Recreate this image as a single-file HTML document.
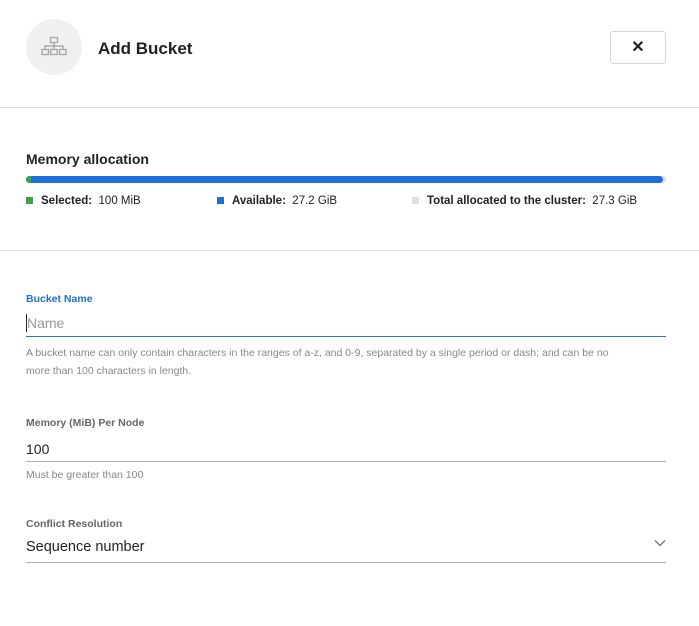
<!DOCTYPE html>
<html><head><meta charset="utf-8"><style>
*{margin:0;padding:0;box-sizing:border-box}
body{width:699px;height:626px;background:#fff;font-family:"Liberation Sans",sans-serif;color:#222;position:relative;overflow:hidden}
.a{position:absolute;white-space:nowrap}
.hr{position:absolute;left:0;width:699px;height:1px;background:#dedede}
.line{position:absolute;left:26px;width:640px;height:1px;background:#aaa}
.lbl{font-size:10.5px;color:#666;font-weight:bold}
.help{font-size:10.5px;color:#888}
.sq{display:inline-block;width:7px;height:7px;vertical-align:0px;margin-right:8px}
</style></head><body>
<div class="a" style="left:26px;top:19px;width:56px;height:56px;border-radius:50%;background:#f0f0f0"></div>
<svg class="a" style="left:41px;top:36px" width="26" height="22" viewBox="0 0 26 22" fill="none" stroke="#aaa" stroke-width="1.4">
<rect x="9.5" y="1.5" width="7" height="5"/><path d="M13 6.5V10M4 13.5V10H22V13.5M13 10v3.5"/><rect x="1" y="13.5" width="6.5" height="5"/><rect x="9.7" y="13.5" width="6.5" height="5"/><rect x="18.5" y="13.5" width="6.5" height="5"/></svg>
<div class="a" style="left:98px;top:39px;font-size:17px;font-weight:bold;color:#222">Add Bucket</div>
<div class="a" style="left:610px;top:31px;width:56px;height:33px;border:1px solid #d6d6d6;border-radius:3px;text-align:center;line-height:31px;font-size:16px;font-weight:bold">✕</div>
<div class="hr" style="top:107px"></div>
<div class="a" style="left:26px;top:151px;font-size:14px;font-weight:bold;color:#222">Memory allocation</div>
<div class="a" style="left:26px;top:176px;width:640px;height:7px;border-radius:4px;background:#e0e0e0"></div>
<div class="a" style="left:26px;top:176px;width:637px;height:7px;border-radius:4px;background:#1f6fd8"></div>
<div class="a" style="left:26px;top:176px;width:5px;height:7px;border-radius:4px 0 0 4px;background:#3ca63c"></div>
<div class="a" style="left:26px;top:195px;font-size:11.5px;color:#222"><span class="sq" style="background:#3ca63c"></span><b>Selected:</b>&nbsp; 100 MiB</div>
<div class="a" style="left:217px;top:195px;font-size:11.5px;color:#222"><span class="sq" style="background:#1f6fd8"></span><b>Available:</b>&nbsp; 27.2 GiB</div>
<div class="a" style="left:412px;top:195px;font-size:11.5px;color:#222"><span class="sq" style="background:#ddd"></span><b>Total allocated to the cluster:</b>&nbsp; 27.3 GiB</div>
<div class="hr" style="top:250px"></div>
<div class="a lbl" style="left:26px;top:293px;color:#1e6fd0">Bucket Name</div>
<div class="a" style="left:26px;top:314px;width:1px;height:18px;background:#222"></div>
<div class="a" style="left:27px;top:315px;font-size:14px;color:#999">Name</div>
<div class="line" style="top:336px;background:#2a72c8"></div>
<div class="a help" style="left:26px;top:344px;line-height:18px">A bucket name can only contain characters in the ranges of a-z, and 0-9, separated by a single period or dash; and can be no<br>more than 100 characters in length.</div>
<div class="a lbl" style="left:26px;top:417px">Memory (MiB) Per Node</div>
<div class="a" style="left:26px;top:441px;font-size:14px;color:#222">100</div>
<div class="line" style="top:461px"></div>
<div class="a help" style="left:26px;top:469px">Must be greater than 100</div>
<div class="a lbl" style="left:26px;top:518px">Conflict Resolution</div>
<div class="a" style="left:26px;top:539px;font-size:14.5px;color:#222">Sequence number</div>
<svg class="a" style="left:654px;top:539px" width="12" height="8" viewBox="0 0 12 8"><path d="M1 1.5l5 5 5-5" fill="none" stroke="#777" stroke-width="1.4"/></svg>
<div class="line" style="top:562px"></div>
</body></html>
